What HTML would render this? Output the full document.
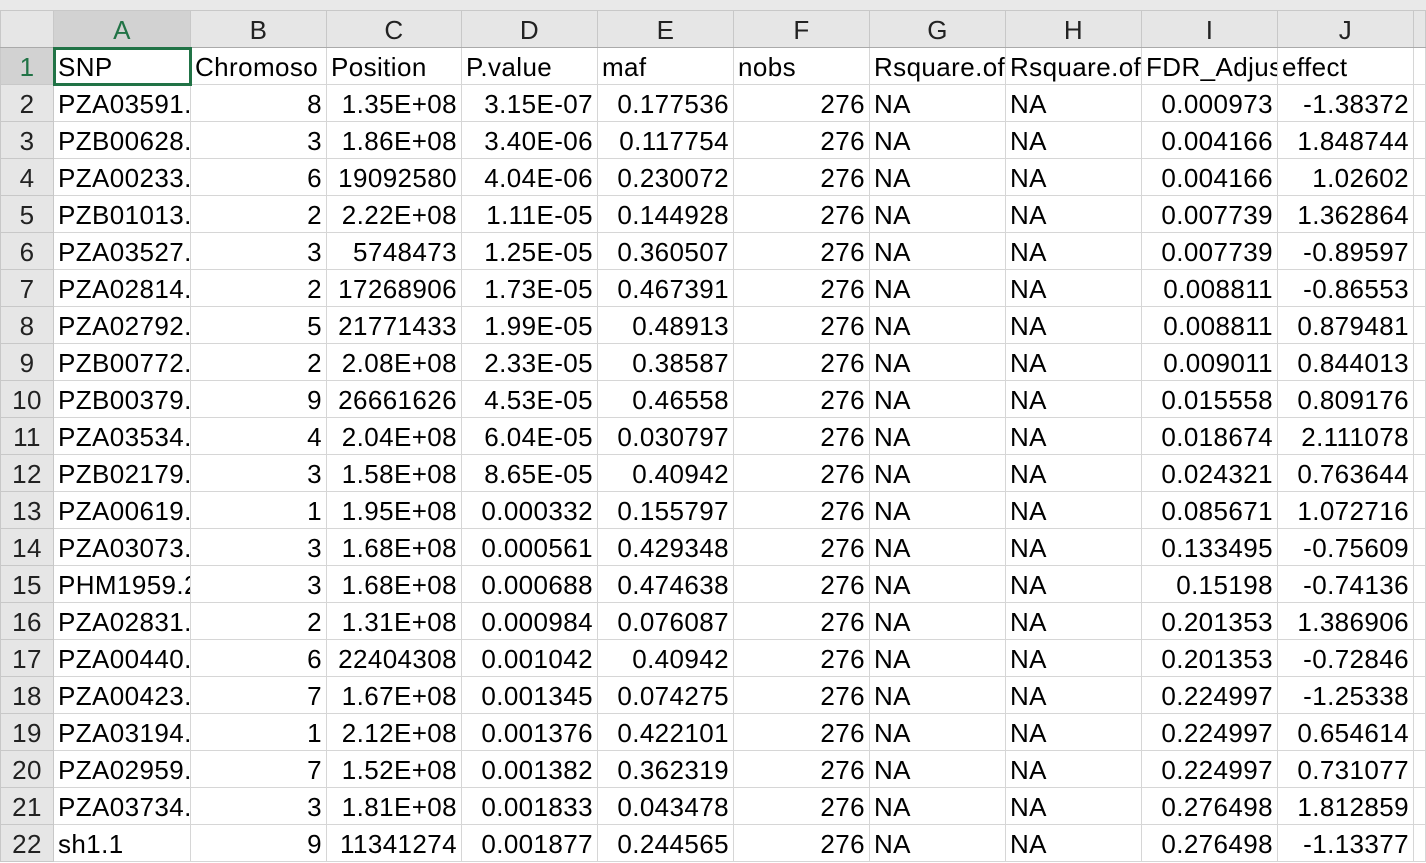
<!DOCTYPE html>
<html><head><meta charset="utf-8"><style>
body{margin:0;width:1426px;height:863px;overflow:hidden;background:#fff;font-family:"Liberation Sans",sans-serif;}
.top{position:absolute;left:0;top:0;width:1426px;height:10px;background:#e9e9e9;}
table{position:absolute;left:0;top:10px;width:1426px;border-collapse:collapse;table-layout:fixed;font-size:26px;color:#000;letter-spacing:0.4px;}
td{border:1px solid #d6d6d6;height:33px;padding:3px 4px 0 4px;white-space:nowrap;overflow:hidden;line-height:33px;text-overflow:clip;}
td.h{background:#e6e6e6;text-align:center;color:#222;border-color:#c8c8c8;padding:3px 0 0 0;}
tr.hd td{border-bottom:1px solid #aaa;}
td.sel{background:#d2d2d2;color:#217346;}
td.r{text-align:right;}
td.n{text-align:center;}
td.a{outline:3px solid #217346;outline-offset:-2px;}
</style></head><body>
<div class="top"></div>
<table>
<colgroup><col style="width:53px"><col style="width:137px"><col style="width:136px"><col style="width:135px"><col style="width:136px"><col style="width:136px"><col style="width:136px"><col style="width:136px"><col style="width:136px"><col style="width:136px"><col style="width:136px"><col style="width:12px"></colgroup>
<tr class="hd"><td class="h" style="background:#e6e6e6"></td><td class="h sel">A</td><td class="h">B</td><td class="h">C</td><td class="h">D</td><td class="h">E</td><td class="h">F</td><td class="h">G</td><td class="h">H</td><td class="h">I</td><td class="h">J</td><td class="h"></td></tr>
<tr><td class="h n sel">1</td><td class="a">SNP</td><td>Chromoso</td><td>Position</td><td>P.value</td><td>maf</td><td>nobs</td><td>Rsquare.of</td><td>Rsquare.of</td><td>FDR_Adjus</td><td>effect</td><td></td></tr>
<tr><td class="h n">2</td><td>PZA03591.</td><td class="r">8</td><td class="r">1.35E+08</td><td class="r">3.15E-07</td><td class="r">0.177536</td><td class="r">276</td><td>NA</td><td>NA</td><td class="r">0.000973</td><td class="r">-1.38372</td><td></td></tr>
<tr><td class="h n">3</td><td>PZB00628.</td><td class="r">3</td><td class="r">1.86E+08</td><td class="r">3.40E-06</td><td class="r">0.117754</td><td class="r">276</td><td>NA</td><td>NA</td><td class="r">0.004166</td><td class="r">1.848744</td><td></td></tr>
<tr><td class="h n">4</td><td>PZA00233.</td><td class="r">6</td><td class="r">19092580</td><td class="r">4.04E-06</td><td class="r">0.230072</td><td class="r">276</td><td>NA</td><td>NA</td><td class="r">0.004166</td><td class="r">1.02602</td><td></td></tr>
<tr><td class="h n">5</td><td>PZB01013.</td><td class="r">2</td><td class="r">2.22E+08</td><td class="r">1.11E-05</td><td class="r">0.144928</td><td class="r">276</td><td>NA</td><td>NA</td><td class="r">0.007739</td><td class="r">1.362864</td><td></td></tr>
<tr><td class="h n">6</td><td>PZA03527.</td><td class="r">3</td><td class="r">5748473</td><td class="r">1.25E-05</td><td class="r">0.360507</td><td class="r">276</td><td>NA</td><td>NA</td><td class="r">0.007739</td><td class="r">-0.89597</td><td></td></tr>
<tr><td class="h n">7</td><td>PZA02814.</td><td class="r">2</td><td class="r">17268906</td><td class="r">1.73E-05</td><td class="r">0.467391</td><td class="r">276</td><td>NA</td><td>NA</td><td class="r">0.008811</td><td class="r">-0.86553</td><td></td></tr>
<tr><td class="h n">8</td><td>PZA02792.</td><td class="r">5</td><td class="r">21771433</td><td class="r">1.99E-05</td><td class="r">0.48913</td><td class="r">276</td><td>NA</td><td>NA</td><td class="r">0.008811</td><td class="r">0.879481</td><td></td></tr>
<tr><td class="h n">9</td><td>PZB00772.</td><td class="r">2</td><td class="r">2.08E+08</td><td class="r">2.33E-05</td><td class="r">0.38587</td><td class="r">276</td><td>NA</td><td>NA</td><td class="r">0.009011</td><td class="r">0.844013</td><td></td></tr>
<tr><td class="h n">10</td><td>PZB00379.</td><td class="r">9</td><td class="r">26661626</td><td class="r">4.53E-05</td><td class="r">0.46558</td><td class="r">276</td><td>NA</td><td>NA</td><td class="r">0.015558</td><td class="r">0.809176</td><td></td></tr>
<tr><td class="h n">11</td><td>PZA03534.</td><td class="r">4</td><td class="r">2.04E+08</td><td class="r">6.04E-05</td><td class="r">0.030797</td><td class="r">276</td><td>NA</td><td>NA</td><td class="r">0.018674</td><td class="r">2.111078</td><td></td></tr>
<tr><td class="h n">12</td><td>PZB02179.</td><td class="r">3</td><td class="r">1.58E+08</td><td class="r">8.65E-05</td><td class="r">0.40942</td><td class="r">276</td><td>NA</td><td>NA</td><td class="r">0.024321</td><td class="r">0.763644</td><td></td></tr>
<tr><td class="h n">13</td><td>PZA00619.</td><td class="r">1</td><td class="r">1.95E+08</td><td class="r">0.000332</td><td class="r">0.155797</td><td class="r">276</td><td>NA</td><td>NA</td><td class="r">0.085671</td><td class="r">1.072716</td><td></td></tr>
<tr><td class="h n">14</td><td>PZA03073.</td><td class="r">3</td><td class="r">1.68E+08</td><td class="r">0.000561</td><td class="r">0.429348</td><td class="r">276</td><td>NA</td><td>NA</td><td class="r">0.133495</td><td class="r">-0.75609</td><td></td></tr>
<tr><td class="h n">15</td><td>PHM1959.2</td><td class="r">3</td><td class="r">1.68E+08</td><td class="r">0.000688</td><td class="r">0.474638</td><td class="r">276</td><td>NA</td><td>NA</td><td class="r">0.15198</td><td class="r">-0.74136</td><td></td></tr>
<tr><td class="h n">16</td><td>PZA02831.</td><td class="r">2</td><td class="r">1.31E+08</td><td class="r">0.000984</td><td class="r">0.076087</td><td class="r">276</td><td>NA</td><td>NA</td><td class="r">0.201353</td><td class="r">1.386906</td><td></td></tr>
<tr><td class="h n">17</td><td>PZA00440.</td><td class="r">6</td><td class="r">22404308</td><td class="r">0.001042</td><td class="r">0.40942</td><td class="r">276</td><td>NA</td><td>NA</td><td class="r">0.201353</td><td class="r">-0.72846</td><td></td></tr>
<tr><td class="h n">18</td><td>PZA00423.</td><td class="r">7</td><td class="r">1.67E+08</td><td class="r">0.001345</td><td class="r">0.074275</td><td class="r">276</td><td>NA</td><td>NA</td><td class="r">0.224997</td><td class="r">-1.25338</td><td></td></tr>
<tr><td class="h n">19</td><td>PZA03194.</td><td class="r">1</td><td class="r">2.12E+08</td><td class="r">0.001376</td><td class="r">0.422101</td><td class="r">276</td><td>NA</td><td>NA</td><td class="r">0.224997</td><td class="r">0.654614</td><td></td></tr>
<tr><td class="h n">20</td><td>PZA02959.</td><td class="r">7</td><td class="r">1.52E+08</td><td class="r">0.001382</td><td class="r">0.362319</td><td class="r">276</td><td>NA</td><td>NA</td><td class="r">0.224997</td><td class="r">0.731077</td><td></td></tr>
<tr><td class="h n">21</td><td>PZA03734.</td><td class="r">3</td><td class="r">1.81E+08</td><td class="r">0.001833</td><td class="r">0.043478</td><td class="r">276</td><td>NA</td><td>NA</td><td class="r">0.276498</td><td class="r">1.812859</td><td></td></tr>
<tr><td class="h n">22</td><td>sh1.1</td><td class="r">9</td><td class="r">11341274</td><td class="r">0.001877</td><td class="r">0.244565</td><td class="r">276</td><td>NA</td><td>NA</td><td class="r">0.276498</td><td class="r">-1.13377</td><td></td></tr>
</table>
</body></html>
